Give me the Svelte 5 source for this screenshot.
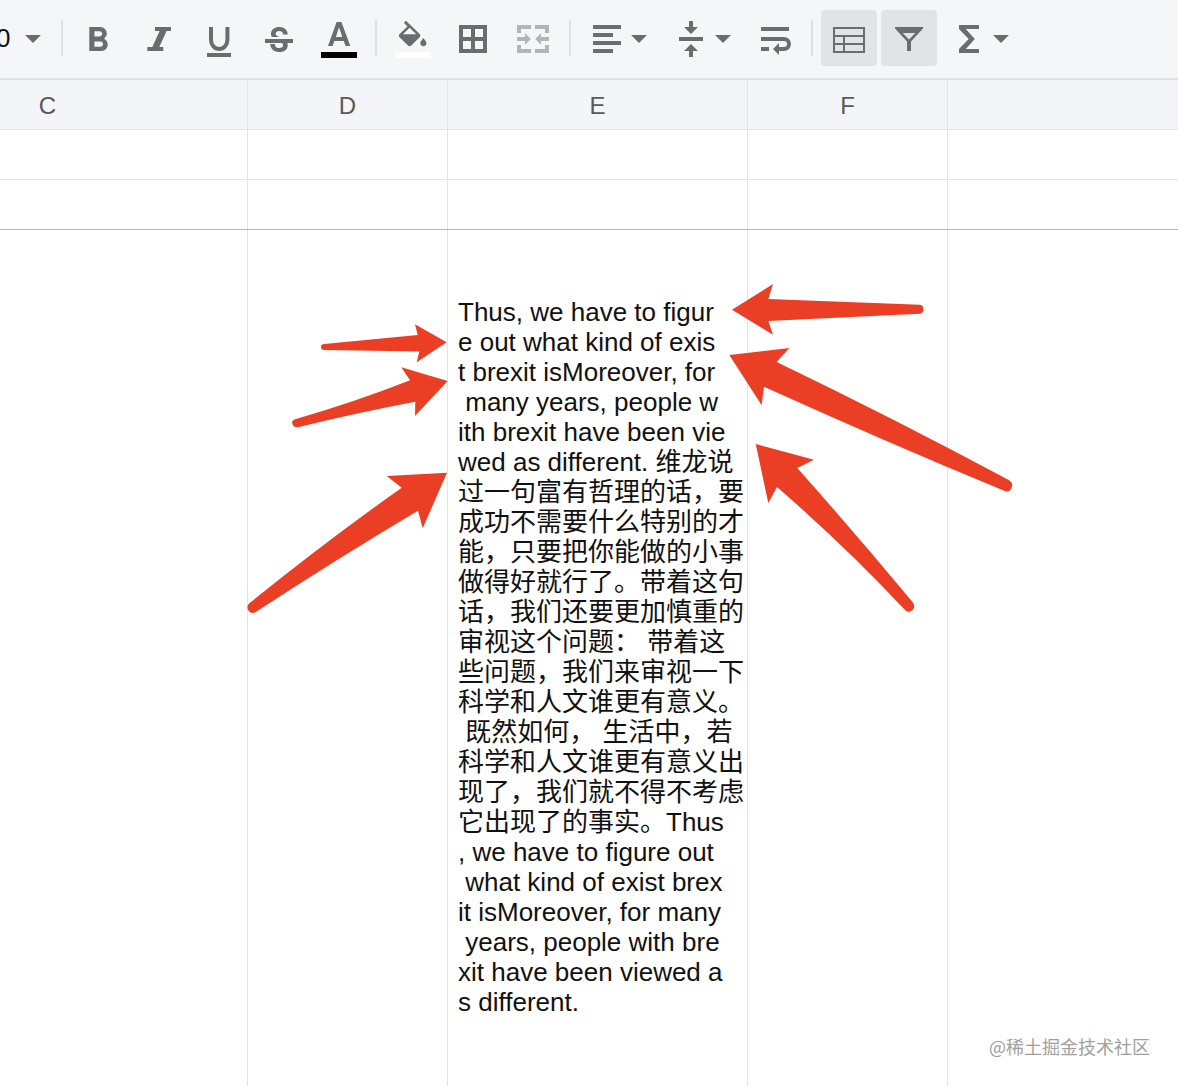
<script lang="ts">
	interface Column {
		label: string;
		width: number;
	}

	const columns: Column[] = [
		{ label: 'C', width: 248 },
		{ label: 'D', width: 200 },
		{ label: 'E', width: 300 },
		{ label: 'F', width: 200 },
		{ label: '', width: 231 }
	];

	const frozenRows = [0, 1];

	// Wrapped at the column width, break by character
	const lines = [
		'Thus, we have to figur',
		'e out what kind of exis',
		't brexit isMoreover, for',
		' many years, people w',
		'ith brexit have been vie',
		'wed as different. 维龙说',
		'过一句富有哲理的话，要',
		'成功不需要什么特别的才',
		'能，只要把你能做的小事',
		'做得好就行了。带着这句',
		'话，我们还要更加慎重的',
		'审视这个问题： 带着这',
		'些问题，我们来审视一下',
		'科学和人文谁更有意义。',
		' 既然如何， 生活中，若',
		'科学和人文谁更有意义出',
		'现了，我们就不得不考虑',
		'它出现了的事实。Thus',
		', we have to figure out',
		' what kind of exist brex',
		'it isMoreover, for many',
		' years, people with bre',
		'xit have been viewed a',
		's different.'
	];

	const arrows = [
		'M324.3 344L417.7 335 415 324.3 446.7 342.3 416.7 362.3 419.3 351.5 324.3 350Q321 350 321 347T324.3 344z',
		'M296 419Q355 402 410 380.3L401.3 367.3 447.7 381 415 416 415.3 401.7Q360 412 297.7 427.3 293.5 427.5 292.3 423.8T296 419z',
		'M249.3 603.3Q325 542 401.7 487.7L386.7 476 447 472.7 422.7 528.3 418 510.7Q335 560 255 612.5 250 614 247.8 609.5 246.5 606 249.3 603.3z',
		'M920 304.7L768.3 299 773 284 732 309.7 773 334.7 768.3 321 920 313.7Q923.5 313 923.5 309.3T920 304.7z',
		'M729.3 355L789.3 348 776.7 362Q893 418 1008.3 479.8 1013 482.5 1012 486.5 1010.5 492 1006 491.6 884 441 764 386.7L761.7 405.3z',
		'M755.7 444L814 459.7 797.3 468Q856 534 912.7 602.2 915.5 606 913 609.5 909.5 613.5 905.5 610.5 845 546 777 487L768.3 503z'
	];
</script>

{#snippet caret()}
	<svg class="caret" width="16" height="8" viewBox="0 0 16 8"><path d="M0 0h16L8 8z" /></svg>
{/snippet}

<div class="sheet">
	<div class="toolbar">
		<div class="font-size">
			<span>0</span>
			{@render caret()}
		</div>
		<div class="separator"></div>
		<button class="tool" title="Bold">
			<svg class="icon" viewBox="0 0 36 36">
				<path transform="translate(-3.7 .14) scale(1.714)" d="M15.6 10.79c.97-.67 1.65-1.77 1.65-2.79 0-2.26-1.75-4-4-4H7v14h7.04c2.09 0 3.71-1.7 3.71-3.79 0-1.52-.86-2.82-2.15-3.42zM10 6.5h3c.83 0 1.5.67 1.5 1.5s-.67 1.5-1.5 1.5h-3v-3zm3.5 9H10v-3h3.5c.83 0 1.5.67 1.5 1.5s-.67 1.5-1.5 1.5z" />
			</svg>
		</button>
		<button class="tool" title="Italic">
			<svg class="icon" viewBox="0 0 36 36">
				<path d="M14 7h16v4h-4.4l-7.3 16h4v4h-16v-4h5l7.3-16H14z" />
			</svg>
		</button>
		<button class="tool" title="Underline">
			<svg class="icon" viewBox="0 0 36 36">
				<path class="line" d="M10 7v13a8.2 9 0 0 0 16.4 0V7" />
				<path d="M6 33h24v4H6z" />
			</svg>
		</button>
		<button class="tool" title="Strikethrough">
			<svg class="icon" viewBox="0 0 36 36">
				<path transform="translate(-.67 2) scale(1.556 1.667)" d="M6.85 7.08C6.85 4.37 9.45 3 12.24 3c1.64 0 3 .49 3.9 1.28.77.65 1.46 1.73 1.46 3.24h-3.01c0-.31-.05-.59-.15-.85-.29-.86-1.2-1.28-2.25-1.28-1.86 0-2.34 1.02-2.34 1.7 0 .48.25.88.74 1.21.38.25.77.48 1.41.7H7.39c-.21-.34-.54-.89-.54-1.92zM12.62 12c1.15.45 1.96.75 1.96 1.97 0 1-.81 1.67-2.28 1.67-1.54 0-2.93-.54-2.93-2.51H6.4c0 .55.08 1.13.24 1.58.81 2.29 3.29 3.3 5.67 3.3 2.27 0 5.3-.89 5.3-4.05 0-.3-.01-1.16-.48-1.94z" />
				<path d="M4 19h28v4H4z" />
			</svg>
		</button>
		<button class="tool" title="Text color">
			<svg class="icon" viewBox="0 0 36 36">
				<path fill-rule="evenodd" d="M15.6 2h4.800L29.300 26h-4.700l-1.800-5H13.400l-1.800 5H7zM18 7.200L14.900 17h6.400z" />
				<path class="swatch-black" d="M0 32h36v6H0z" />
			</svg>
		</button>
		<div class="separator"></div>
		<button class="tool" title="Fill color">
			<svg class="icon" viewBox="0 0 36 36">
				<path transform="translate(-.7 .7) scale(1.53 1.5)" d="M16.56 8.94L7.62 0 6.21 1.41l2.38 2.38-5.15 5.15c-.59.59-.59 1.54 0 2.12l5.5 5.5c.29.29.68.44 1.06.44s.77-.15 1.06-.44l5.500-5.500c.59-.58.59-1.53 0-2.12zM5.600 9L10 4.700 14.400 9H5.600zM19 11.500s-2 2.17-2 3.500c0 1.100.9 2 2 2s2-.9 2-2c0-1.330-2-3.500-2-3.500z" />
				<path class="swatch-white" d="M0 32h36v6H0z" />
			</svg>
		</button>
		<button class="tool" title="Borders">
			<svg class="icon" viewBox="0 0 36 36">
				<path fill-rule="evenodd" d="M4 5h28v28H4zM8 9v8h8V9zm12 0v8h8V9zM8 21v8h8v-8zm12 0v8h8v-8z" />
			</svg>
		</button>
		<button class="tool disabled" title="Merge cells">
			<svg class="icon" viewBox="0 0 36 36">
				<path d="M2 5h14v4H6v4H2zM20 5h14v8h-4V9H20zM2 25h4v4h10v4H2zM30 25h4v8H20v-4h10z" />
				<path d="M2 17h8v-4l5.800 6-5.800 6v-4H2zM34 17h-8v-4l-5.800 6 5.800 6v-4h8z" />
			</svg>
		</button>
		<div class="separator"></div>
		<button class="tool wide" title="Horizontal align">
			<svg class="icon" viewBox="0 0 36 36">
				<path d="M4 5h28v4H4zM4 13h20v4H4zM4 21h28v4H4zM4 29h20v4H4z" />
			</svg>
			{@render caret()}
		</button>
		<button class="tool wide" title="Vertical align">
			<svg class="icon" viewBox="0 0 36 36">
				<path d="M16 1h4v6h5l-7 7-7-7h5zM6 17h24v4H6zM18 24l7 7h-5v6h-4v-6h-5z" />
			</svg>
			{@render caret()}
		</button>
		<button class="tool" title="Text wrapping">
			<svg class="icon" viewBox="0 0 36 36">
				<path d="M4 7h28v4H4zM4 27h8v4H4zM22 23v12l-6-6z" />
				<path class="line" d="M4 19h23a5 5 0 0 1 0 10h-6" />
			</svg>
		</button>
		<div class="separator"></div>
		<button class="tool active" title="Table view">
			<svg class="icon" viewBox="0 0 36 36">
				<path class="line thin" d="M3 8h30v24H3zM3 16h30M3 24h30M13 16v16" />
			</svg>
		</button>
		<button class="tool active" title="Filter">
			<svg class="icon" viewBox="0 0 36 36">
				<path fill-rule="evenodd" d="M4 7h28v1.5L20 21.5V31h-4v-9.5L4 8.5zM11.7 13l6.3 6.5 6.3-6.5z" />
			</svg>
		</button>
		<button class="tool wide" title="Functions">
			<svg class="icon" viewBox="0 0 36 36">
				<path d="M8 5h20v4H14.8l9 10-9 10H28v4H8v-4l9.7-10L8 9z" />
			</svg>
			{@render caret()}
		</button>
	</div>

	<div class="row header">
		{#each columns as column}
			<div class="cell" style="width: {column.width}px">{column.label}</div>
		{/each}
	</div>

	{#each frozenRows as row}
		<div class="row" class:freeze={row === frozenRows.length - 1}>
			{#each columns as column}
				<div class="cell" style="width: {column.width}px"></div>
			{/each}
		</div>
	{/each}

	<div class="row content">
		{#each columns as column}
			<div class="cell" style="width: {column.width}px">
				{#if column.label === 'E'}
					{#each lines as line}
						<div class="text-line">{line}</div>
					{/each}
				{/if}
			</div>
		{/each}
	</div>

	<svg class="arrows" width="1178" height="1086" viewBox="0 0 1178 1086">
		{#each arrows as d}
			<path {d} />
		{/each}
	</svg>

	<div class="watermark">@稀土掘金技术社区</div>
</div>

<style>
	:global(body) {
		background: #fff;
		overflow: hidden;
	}

	.sheet {
		position: relative;
		display: flex;
		flex-direction: column;
		width: 1178px;
		height: 1086px;
		overflow: hidden;
		font-family: 'Liberation Sans', 'Noto Sans CJK SC', sans-serif;
	}

	.toolbar {
		display: flex;
		align-items: center;
		gap: 4px;
		box-sizing: border-box;
		flex: none;
		height: 80px;
		padding-bottom: 2px;
		border-bottom: 2px solid #dfe0e2;
		background: #f4f6f8;
	}

	.font-size {
		display: flex;
		align-items: center;
		justify-content: space-between;
		box-sizing: border-box;
		width: 53px;
		padding-right: 12px;
		color: #111;
		font-size: 26px;
		line-height: 30px;
	}

	.font-size span {
		margin-left: -4px;
	}

	.separator {
		flex: none;
		width: 2px;
		height: 36px;
		margin: 0 4px;
		background: #dfe0e2;
	}

	.tool {
		display: flex;
		align-items: center;
		flex: none;
		width: 56px;
		height: 56px;
		padding: 0 10px;
		border: none;
		border-radius: 4px;
		background: transparent;
		color: #6b6c6e;
	}

	.tool.wide {
		gap: 6px;
		width: 80px;
	}

	.tool.active {
		background: #e2e3e5;
	}

	.tool.disabled {
		color: #b3b4b6;
	}

	.icon {
		flex: none;
		width: 36px;
		height: 36px;
		overflow: visible;
		fill: currentColor;
	}

	.icon .line {
		fill: none;
		stroke: currentColor;
		stroke-width: 4;
	}

	.icon .thin {
		stroke-width: 2;
	}

	.icon .swatch-black {
		fill: #000;
	}

	.icon .swatch-white {
		fill: #fff;
	}

	.caret {
		flex: none;
		margin-top: 2px;
		fill: #6b6c6e;
	}

	.row {
		display: flex;
		flex: none;
		box-sizing: border-box;
		height: 50px;
		border-bottom: 1px solid #e3e4e5;
	}

	.row.header {
		background: #f4f5f9;
		color: #58595b;
		font-size: 24px;
		line-height: 51px;
		text-align: center;
	}

	.row.freeze {
		border-bottom-color: #9bbccc;
	}

	.row.content {
		flex: 1;
		border-bottom: none;
	}

	.cell {
		box-sizing: border-box;
		flex: none;
		border-right: 1px solid #e3e4e5;
	}

	/* column C starts outside the viewport, keep its label centered */
	.header .cell:first-child {
		padding-right: 152px;
	}

	.content .cell {
		padding: 67px 0 0 10px;
	}

	.text-line {
		height: 30px;
		color: #111;
		font-size: 26px;
		line-height: 30px;
		white-space: pre;
	}

	.arrows {
		position: absolute;
		top: 0;
		left: 0;
		fill: #ea3f25;
		pointer-events: none;
	}

	.watermark {
		position: absolute;
		right: 28px;
		bottom: 27px;
		color: #a0a0a0;
		font-family: 'Noto Sans CJK SC', sans-serif;
		font-size: 18px;
		line-height: 26px;
	}
</style>
